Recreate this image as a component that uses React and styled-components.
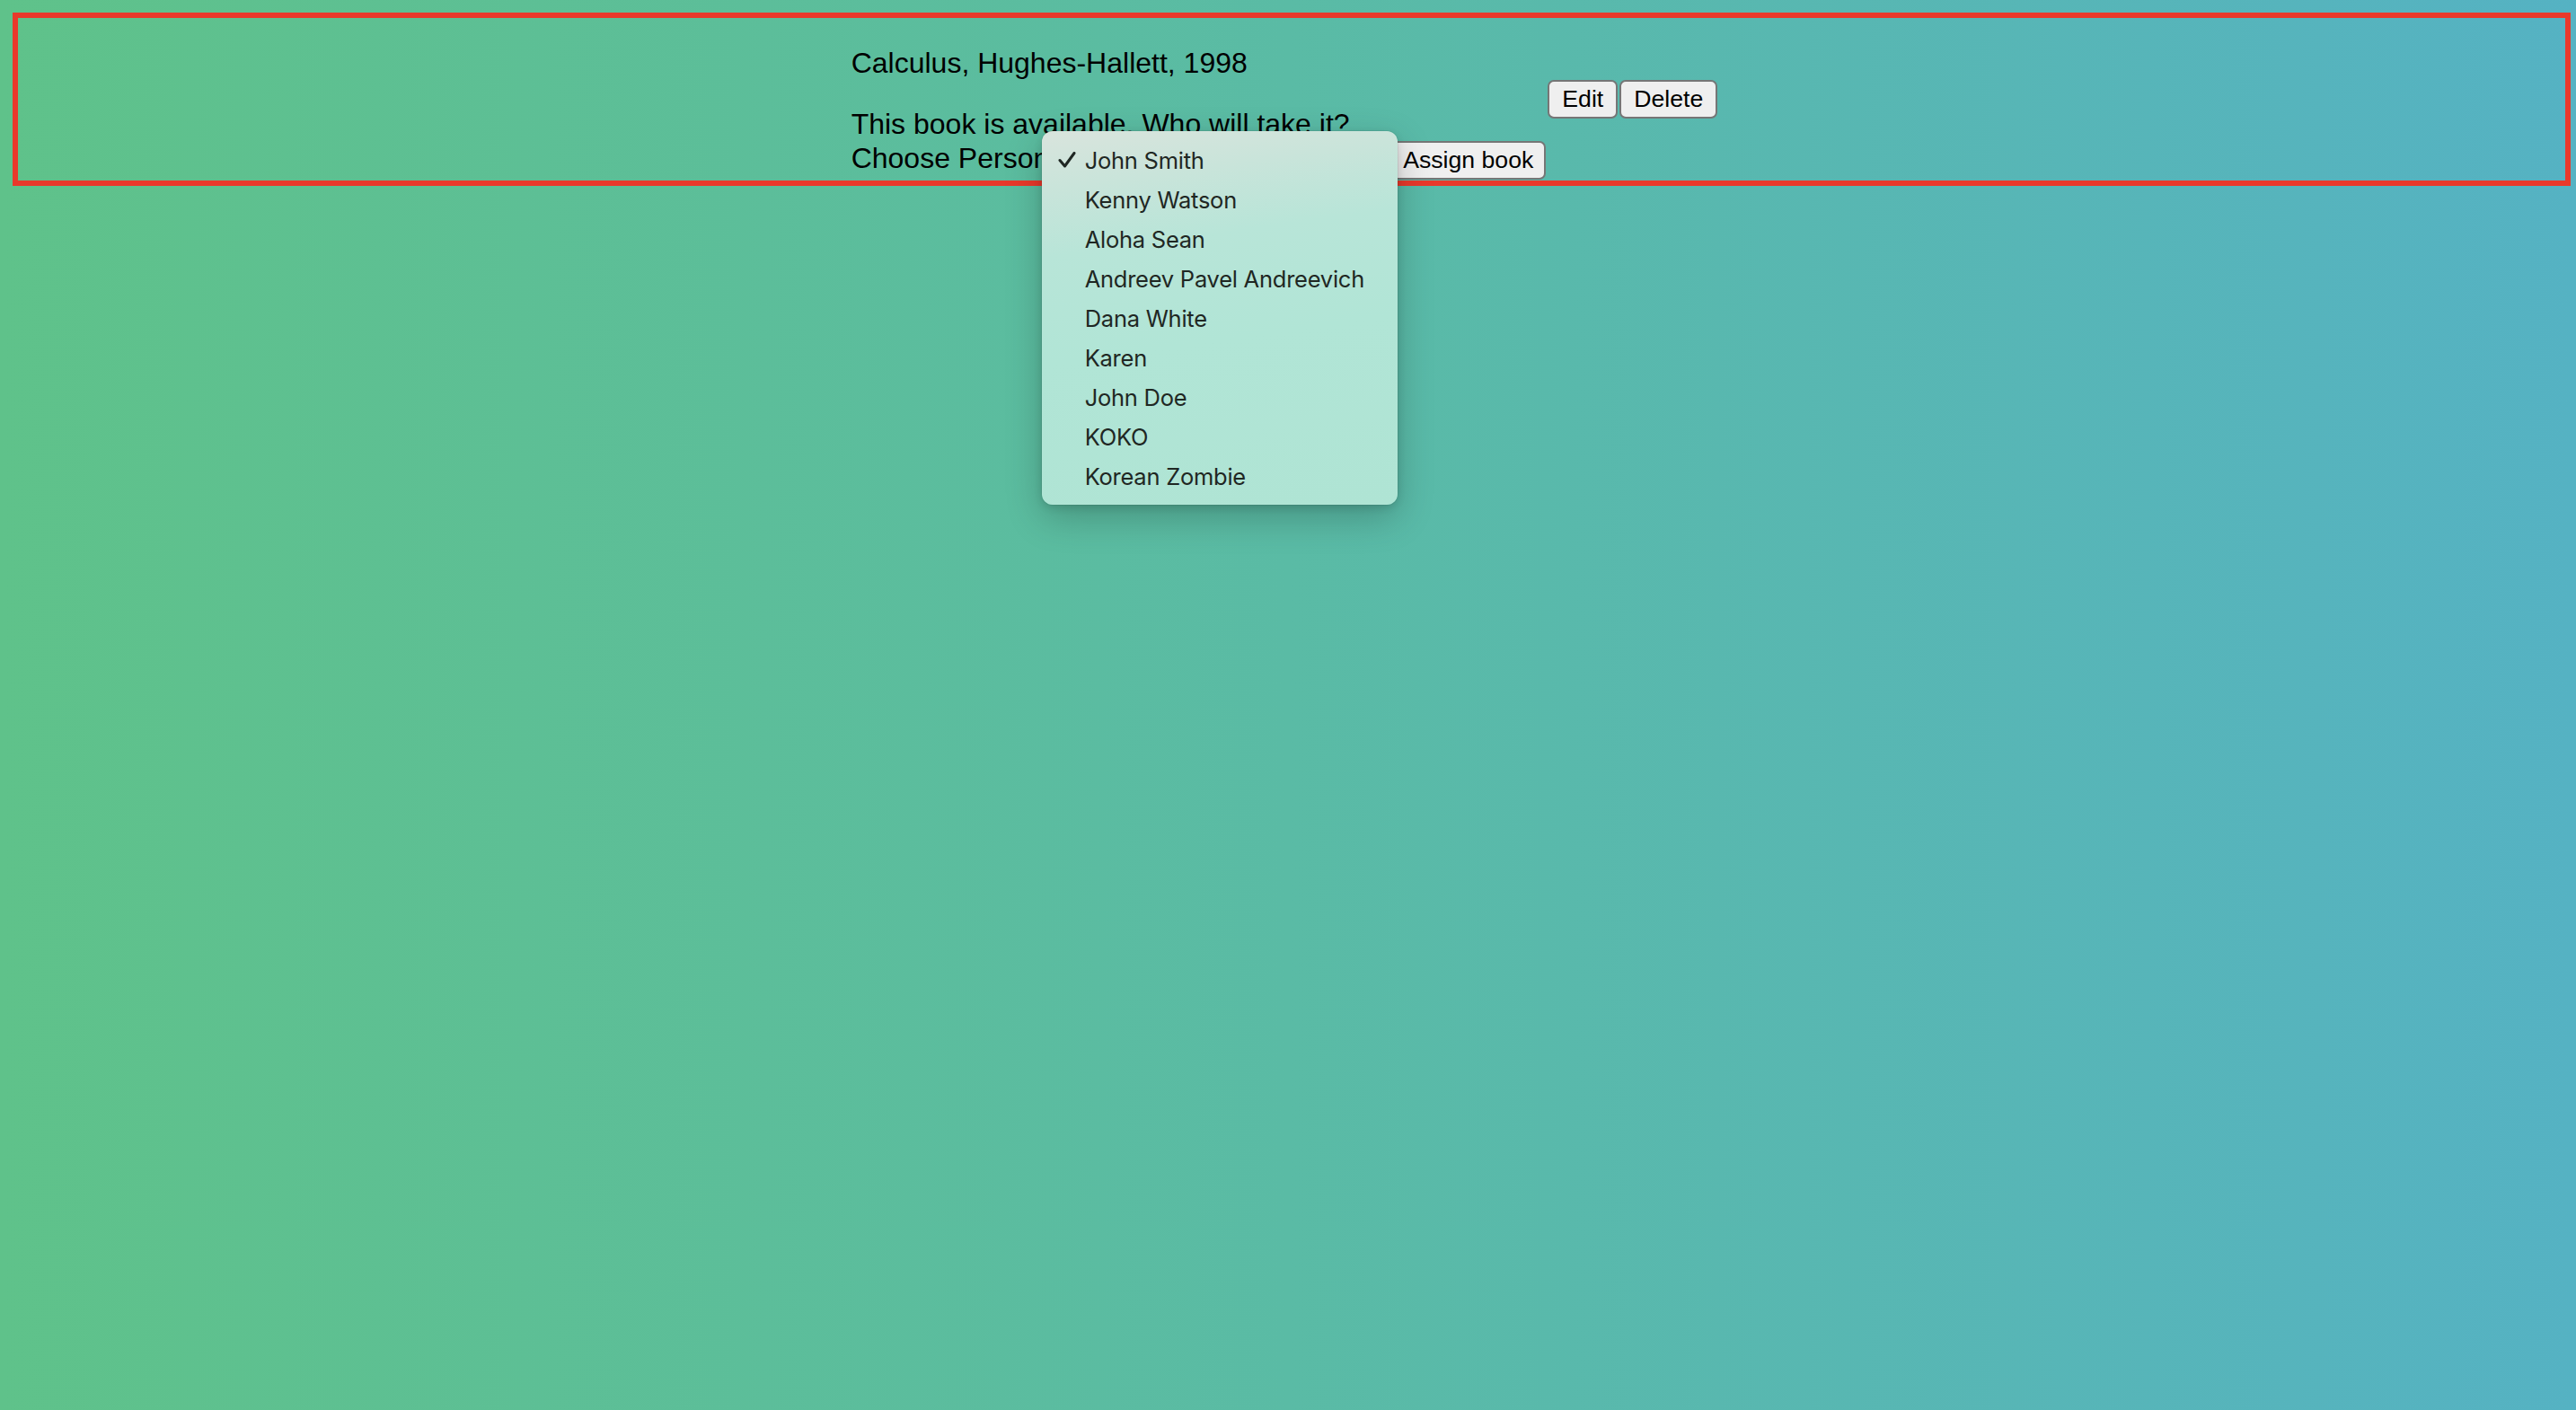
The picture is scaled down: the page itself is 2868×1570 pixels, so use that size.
import React from 'react';
import styled, { createGlobalStyle } from 'styled-components';

const Global = createGlobalStyle`
  html, body { margin: 0; padding: 0; }
  body { font-family: 'Liberation Sans', Arial, Helvetica, sans-serif; }
`;

const Page = styled.div`
  min-height: 100vh;
  box-sizing: border-box;
  padding: 14px 6px 0 14px;
  background: linear-gradient(to right, #5fc28a 0%, #5abba5 50%, #55b2c3 100%);
`;

const Card = styled.section`
  border: 6px solid #e9392b;
  display: flex;
  justify-content: center;
  align-items: center;
  padding-right: 16px;
`;

const Info = styled.div`
  padding: 32px 0 1px;
  font-size: 32px;
  line-height: 37px;
  color: #000;
`;

const Title = styled.div`
  margin-bottom: 31px;
`;

const Line = styled.div``;

const ChooseRow = styled.div`
  position: relative;
  display: flex;
  align-items: baseline;
`;

const SelectBox = styled.div`
  margin-left: 9px;
  width: 353px;
  height: 40px;
  box-sizing: border-box;
  border: 2px solid #767676;
  border-radius: 8px;
  background: #fff;
  font-size: 26px;
  line-height: 36px;
  padding-left: 21px;
`;

const Button = styled.button`
  font-family: 'Liberation Sans', Arial, Helvetica, sans-serif;
  font-size: 26.67px;
  height: 43px;
  padding: 0 ${p => p.$px || 14}px;
  margin: 0 0 0 ${p => p.$ml || 0}px;
  border: 2px solid #767676;
  border-radius: 7px;
  background: #efefef;
  color: #000;
  box-sizing: border-box;
  cursor: pointer;
`;

const Actions = styled.div`
  display: flex;
  gap: 2px;
  margin-left: 2px;
`;

const Menu = styled.ul`
  position: absolute;
  left: 212px;
  top: -11px;
  z-index: 10;
  width: 396px;
  box-sizing: border-box;
  margin: 0;
  padding: 10px 0;
  list-style: none;
  border-radius: 12px;
  background: linear-gradient(172deg, #d9e4dd 0%, #c9e4da 14%, #b8e5d8 30%, #b1e5d6 55%, #afe4d4 100%);
  box-shadow: 0 0 0 1px rgba(0, 0, 0, 0.05), 0 14px 40px rgba(0, 0, 0, 0.22), 0 3px 10px rgba(0, 0, 0, 0.12);
  font-family: Inter, 'Noto Sans', sans-serif;
  font-size: 25.5px;
  letter-spacing: -0.25px;
  color: #1f2723;
`;

const Item = styled.li`
  height: 44px;
  display: flex;
  align-items: center;
  padding-left: 18px;
  white-space: nowrap;
`;

const CheckSlot = styled.span`
  width: 30px;
  height: 20px;
  display: flex;
  align-items: center;
`;

const Check = () => (
  <svg width="20" height="18" viewBox="0 0 20 18" fill="none">
    <path d="M2 9.5 L7.5 16 L18 1.5" stroke="#1f2723" strokeWidth="3" strokeLinecap="round" strokeLinejoin="round" />
  </svg>
);

const people = [
  'John Smith',
  'Kenny Watson',
  'Aloha Sean',
  'Andreev Pavel Andreevich',
  'Dana White',
  'Karen',
  'John Doe',
  'KOKO',
  'Korean Zombie',
];

export default function App() {
  const selected = 'John Smith';
  return (
    <>
      <Global />
      <Page>
        <Card>
          <Info>
            <Title>Calculus, Hughes-Hallett, 1998</Title>
            <Line>This book is available. Who will take it?</Line>
            <ChooseRow>
              <span>Choose Person:</span>
              <SelectBox>{selected}</SelectBox>
              <Button $ml={9} $px={12}>Assign book</Button>
              <Menu role="listbox">
                {people.map(p => (
                  <Item key={p} role="option" aria-selected={p === selected}>
                    <CheckSlot>{p === selected && <Check />}</CheckSlot>
                    {p}
                  </Item>
                ))}
              </Menu>
            </ChooseRow>
          </Info>
          <Actions>
            <Button>Edit</Button>
            <Button>Delete</Button>
          </Actions>
        </Card>
      </Page>
    </>
  );
}
